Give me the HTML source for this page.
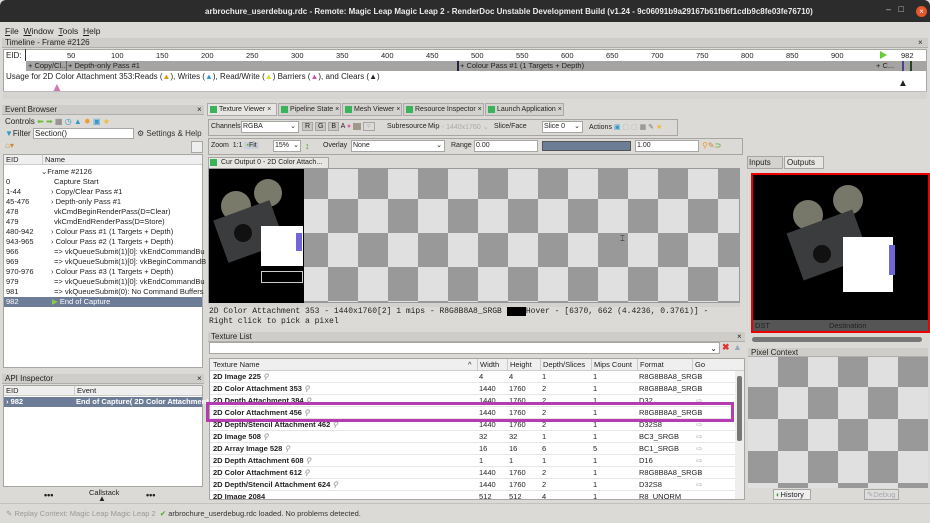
<!DOCTYPE html>
<html><head><meta charset="utf-8"><style>
*{margin:0;padding:0;box-sizing:border-box}
body{width:930px;height:523px;overflow:hidden;background:#dcdad6;font-family:"Liberation Sans",sans-serif;font-size:8px;color:#222;position:relative}
.a{position:absolute;white-space:nowrap}
.w{background:#fff}
.bd{border:1px solid #a8a6a2}
.ttl{background:#cfcdc9;border-bottom:1px solid #b0aea9;font-size:8px;padding-left:3px;line-height:9px}
.chk{background-color:#e0e0e0;background-image:repeating-conic-gradient(#999 0 25%,#e0e0e0 0 50%)}
.tab{position:absolute;top:103px;height:13px;background:#d4d2ce;border:1px solid #aaa;line-height:11px;font-size:7px;padding-left:11px;white-space:nowrap;overflow:hidden}
.tab:before{content:"";position:absolute;left:2px;top:2px;width:7px;height:7px;background:#3bb35a}
.row{position:absolute;left:0;height:10px;line-height:10px;width:100%}
.tr{position:absolute;left:0;width:100%;height:12px;line-height:12px;font-size:7.5px;border-bottom:1px solid #e6e6e6}
.tr span{position:absolute}
.t7{font-size:7px}
</style></head><body>
<!-- title bar -->
<div class="a" style="left:0;top:0;width:930px;height:22px;background:#2c2c2c;border-radius:6px 6px 0 0"></div>
<div class="a" style="left:205px;top:7px;color:#ececec;font-size:8px;font-weight:bold">arbrochure_userdebug.rdc - Remote: Magic Leap Magic Leap 2 - RenderDoc Unstable Development Build (v1.24 - 9c06091b9a29167b61fb6f1cdb9c8fe03fe76710)</div>
<div class="a" style="left:886px;top:4px;color:#ccc;font-size:9px">–&nbsp;&nbsp;&nbsp;□</div>
<div class="a" style="left:916px;top:6px;width:11px;height:11px;border-radius:50%;background:#e9552a;color:#fff;font-size:8px;text-align:center;line-height:11px">×</div>
<!-- menu -->
<div class="a" style="left:5px;top:26px;font-size:8.5px"><u>F</u>ile&nbsp;&nbsp;<u>W</u>indow&nbsp;&nbsp;<u>T</u>ools&nbsp;&nbsp;<u>H</u>elp</div>
<!-- timeline -->
<div class="a ttl" style="left:2px;top:38px;width:926px;height:10px">Timeline - Frame #2126</div>
<div class="a" style="left:918px;top:38px;font-size:8px">×</div>
<div class="a bd w" style="left:3px;top:49px;width:924px;height:50px"></div>
<div class="a" style="left:6px;top:51px;font-size:8px">EID:</div>
<div class="a" style="left:25px;top:49px;width:1px;height:12px;background:#333"></div>
<div class="a" style="left:5px;top:51px;width:910px;font-size:7.5px">
<span class="a" style="left:62px">50</span><span class="a" style="left:106px">100</span><span class="a" style="left:196px">200</span><span class="a" style="left:151px">150</span><span class="a" style="left:241px">250</span><span class="a" style="left:286px">300</span><span class="a" style="left:331px">350</span><span class="a" style="left:376px">400</span><span class="a" style="left:421px">450</span><span class="a" style="left:466px">500</span><span class="a" style="left:511px">550</span><span class="a" style="left:556px">600</span><span class="a" style="left:601px">650</span><span class="a" style="left:646px">700</span><span class="a" style="left:691px">750</span><span class="a" style="left:736px">800</span><span class="a" style="left:781px">850</span><span class="a" style="left:826px">900</span><span class="a" style="left:896px">982</span></div>
<div class="a" style="left:880px;top:51px;width:0;height:0;border-left:7px solid #6c3;border-top:4px solid transparent;border-bottom:4px solid transparent"></div>
<div class="a" style="left:26px;top:61px;width:900px;height:10px;background:#a5a4a2;font-size:7.5px;line-height:10px">
<span class="a" style="left:2px">+ Copy/Cl...</span><span class="a" style="left:40px;top:0;width:1px;height:10px;background:#666"></span><span class="a" style="left:42px">+ Depth-only Pass #1</span><span class="a" style="left:431px;width:2px;height:10px;background:#224"></span><span class="a" style="left:434px">+ Colour Pass #1 (1 Targets + Depth)</span><span class="a" style="left:850px">+ C...</span><span class="a" style="left:876px;width:2px;height:10px;background:#449"></span><span class="a" style="left:884px;width:2px;height:10px;background:#242"></span></div>
<div class="a" style="left:6px;top:72px;font-size:8px">Usage for 2D Color Attachment 353:Reads (<span style="color:#d90">▲</span>), Writes (<span style="color:#39d">▲</span>), Read/Write (<span style="color:#dd2">▲</span>) Barriers (<span style="color:#c5a">▲</span>), and Clears (▲)</div>
<div class="a" style="left:51px;top:80px;color:#d07ab5;font-size:12px">▲</div>
<div class="a" style="left:898px;top:78px;font-size:10px">▲</div>
<div class="a" style="left:3px;top:91px;width:924px;height:8px;background:#d6d4d0;border-top:1px solid #bbb"></div>
<!-- Event browser -->
<div class="a ttl" style="left:2px;top:105px;width:202px;height:10px">Event Browser</div>
<div class="a" style="left:197px;top:105px">×</div>
<div class="a" style="left:5px;top:117px;font-size:8px">Controls <span style="color:#6b3">⬅ ➡</span> <span style="color:#777">▦</span> <span style="color:#39c">◷ ▲</span> <span style="color:#e93">✸</span> <span style="color:#39c">▣</span> <span style="color:#eb3">★</span></div>
<div class="a" style="left:5px;top:129px;font-size:8px"><span style="color:#39c">▼</span>Filter</div>
<div class="a bd w" style="left:33px;top:128px;width:101px;height:11px;font-size:8px;line-height:9px;padding-left:1px">Section()</div>
<div class="a" style="left:137px;top:129px;font-size:8px;color:#333">⚙ Settings &amp; Help</div>
<div class="a" style="left:5px;top:141px;font-size:8px;color:#c83">⌂▾</div>
<div class="a bd" style="left:191px;top:141px;width:12px;height:12px;background:#eee"></div>
<div class="a bd w" style="left:3px;top:154px;width:200px;height:214px;font-size:7.5px">
<div class="row" style="top:0;background:#efefef;border-bottom:1px solid #ccc"><span class="a" style="left:2px">EID</span><span class="a" style="left:38px;border-left:1px solid #ccc;padding-left:2px">Name</span></div>
<div class="row" style="top:12px"><span class="a" style="left:37px">⌄Frame #2126</span></div>
<div class="row" style="top:22px"><span class="a" style="left:2px">0</span><span class="a" style="left:50px">Capture Start</span></div>
<div class="row" style="top:32px"><span class="a" style="left:2px">1-44</span><span class="a" style="left:47px">› Copy/Clear Pass #1</span></div>
<div class="row" style="top:42px"><span class="a" style="left:2px">45-476</span><span class="a" style="left:47px">› Depth-only Pass #1</span></div>
<div class="row" style="top:52px"><span class="a" style="left:2px">478</span><span class="a" style="left:50px">vkCmdBeginRenderPass(D=Clear)</span></div>
<div class="row" style="top:62px"><span class="a" style="left:2px">479</span><span class="a" style="left:50px">vkCmdEndRenderPass(D=Store)</span></div>
<div class="row" style="top:72px"><span class="a" style="left:2px">480-942</span><span class="a" style="left:47px">› Colour Pass #1 (1 Targets + Depth)</span></div>
<div class="row" style="top:82px"><span class="a" style="left:2px">943-965</span><span class="a" style="left:47px">› Colour Pass #2 (1 Targets + Depth)</span></div>
<div class="row" style="top:92px"><span class="a" style="left:2px">966</span><span class="a" style="left:50px">=&gt; vkQueueSubmit(1)[0]: vkEndCommandBu</span></div>
<div class="row" style="top:102px"><span class="a" style="left:2px">969</span><span class="a" style="left:50px">=&gt; vkQueueSubmit(1)[0]: vkBeginCommandB</span></div>
<div class="row" style="top:112px"><span class="a" style="left:2px">970-976</span><span class="a" style="left:47px">› Colour Pass #3 (1 Targets + Depth)</span></div>
<div class="row" style="top:122px"><span class="a" style="left:2px">979</span><span class="a" style="left:50px">=&gt; vkQueueSubmit(1)[0]: vkEndCommandBu</span></div>
<div class="row" style="top:132px"><span class="a" style="left:2px">981</span><span class="a" style="left:50px">=&gt; vkQueueSubmit(0): No Command Buffers</span></div>
<div class="row" style="top:142px;background:#6d7d98;color:#fff"><span class="a" style="left:2px">982</span><span class="a" style="left:48px"><span style="color:#8c4">▶</span> End of Capture</span></div>
</div>
<!-- API inspector -->
<div class="a ttl" style="left:2px;top:374px;width:202px;height:10px">API Inspector</div>
<div class="a" style="left:197px;top:374px">×</div>
<div class="a bd w" style="left:3px;top:385px;width:200px;height:102px;font-size:7.5px">
<div class="row" style="top:0;background:#efefef;border-bottom:1px solid #ccc"><span class="a" style="left:2px">EID</span><span class="a" style="left:70px;border-left:1px solid #ccc;padding-left:2px">Event</span></div>
<div class="row" style="top:11px;background:#6d7d98;color:#fff;font-weight:bold"><span class="a" style="left:2px">› 982</span><span class="a" style="left:72px">End of Capture( 2D Color Attachment</span></div>
</div>
<div class="a" style="left:44px;top:490px;font-size:9px;font-weight:bold">•••</div>
<div class="a" style="left:89px;top:488px;font-size:7.5px">Callstack</div>
<div class="a" style="left:98px;top:494px;font-size:8px">▲</div>
<div class="a" style="left:146px;top:490px;font-size:9px;font-weight:bold">•••</div>
<div class="a" style="left:0;top:503px;width:930px;height:1px;background:#c4c2be"></div>
<div class="a" style="left:6px;top:509px;font-size:7.5px;color:#999">✎ Replay Context: Magic Leap Magic Leap 2 &nbsp;<span style="color:#4a2">✔</span> <span style="color:#333">arbrochure_userdebug.rdc loaded. No problems detected.</span></div>
<!-- tabs -->
<div class="tab" style="left:207px;width:70px;background:#e8e6e2">Texture Viewer ×</div>
<div class="tab" style="left:278px;width:63px">Pipeline State ×</div>
<div class="tab" style="left:342px;width:60px">Mesh Viewer ×</div>
<div class="tab" style="left:403px;width:81px">Resource Inspector ×</div>
<div class="tab" style="left:485px;width:79px">Launch Application ×</div>
<!-- toolbars -->
<div class="a bd" style="left:208px;top:119px;width:470px;height:17px"></div>
<div class="a t7" style="left:211px;top:123px">Channels</div>
<div class="a bd w t7" style="left:241px;top:121px;width:58px;height:12px;line-height:10px;padding-left:1px">RGBA<span style="float:right;margin-right:2px">⌄</span></div>
<div class="a t7" style="left:302px;top:121px;line-height:12px"><span class="bd" style="padding:0 2px;background:#c9c7c3">R</span> <span class="bd" style="padding:0 2px;background:#c9c7c3">G</span> <span class="bd" style="padding:0 2px;background:#c9c7c3">B</span> A <span style="color:#d6a">●</span> <span style="background:#a0988a;padding:0 3px">&nbsp;</span> <span class="bd" style="padding:0 3px;color:#aab">▿</span></div>
<div class="a t7" style="left:387px;top:123px">Subresource</div>
<div class="a t7" style="left:428px;top:123px">Mip</div>
<div class="a t7" style="left:436px;top:123px;color:#aaa">0 - 1440x1760 ⌄</div>
<div class="a t7" style="left:494px;top:123px">Slice/Face</div>
<div class="a bd w t7" style="left:542px;top:121px;width:41px;height:12px;line-height:10px;padding-left:1px">Slice 0<span style="float:right;margin-right:2px">⌄</span></div>
<div class="a t7" style="left:589px;top:123px">Actions <span style="color:#39c">▣</span> <span style="color:#bbb">▢ ▢</span> <span style="color:#777">▦ ✎</span> <span style="color:#eb3">★</span></div>
<div class="a bd" style="left:208px;top:138px;width:535px;height:17px"></div>
<div class="a t7" style="left:211px;top:142px">Zoom &nbsp;1:1 <span style="background:#c8cfd8;padding:0 2px"><span style="color:#6b3">▪</span>Fit</span></div>
<div class="a bd w t7" style="left:273px;top:140px;width:28px;height:12px;line-height:10px;padding-left:1px">15%<span style="float:right;margin-right:1px">⌄</span></div>
<div class="a" style="left:305px;top:141px;color:#4a2;font-size:9px">↕</div>
<div class="a t7" style="left:323px;top:142px">Overlay</div>
<div class="a bd w t7" style="left:351px;top:140px;width:94px;height:12px;line-height:10px;padding-left:1px">None<span style="float:right;margin-right:2px">⌄</span></div>
<div class="a t7" style="left:451px;top:142px">Range</div>
<div class="a bd w t7" style="left:474px;top:140px;width:64px;height:12px;line-height:10px;padding-left:1px">0.00</div>
<div class="a" style="left:542px;top:141px;width:89px;height:10px;background:#6c7d96;border:1px solid #555"></div>
<div class="a bd w t7" style="left:635px;top:140px;width:64px;height:12px;line-height:10px;padding-left:1px">1.00</div>
<div class="a" style="left:702px;top:141px;font-size:8px"><span style="color:#e93">⚲</span><span style="color:#c83">✎</span><span style="color:#4a2">⊃</span></div>
<!-- cur output tab -->
<div class="a bd t7" style="left:208px;top:157px;width:121px;height:12px;line-height:10px;padding-left:12px;background:#e8e6e2">Cur Output 0 - 2D Color Attach...</div>
<div class="a" style="left:210px;top:159px;width:7px;height:7px;background:#3bb35a"></div>
<!-- image area -->
<div class="a chk" style="left:208px;top:168px;width:532px;height:135px;background-size:60px 68px;background-position:59px -4px;border:1px solid #999"></div>
<div class="a" style="left:209px;top:169px;width:95px;height:134px;background:#000;overflow:hidden">
<div class="a" style="left:12px;top:22px;width:30px;height:30px;border-radius:50%;background:#7a7a6a"></div>
<div class="a" style="left:45px;top:10px;width:28px;height:28px;border-radius:50%;background:#7a7a6a"></div>
<div class="a" style="left:10px;top:40px;width:60px;height:45px;background:#3a3c3e;transform:rotate(-20deg)"></div>
<div class="a" style="left:25px;top:55px;width:18px;height:18px;border-radius:50%;background:#111"></div>
<div class="a" style="left:52px;top:57px;width:42px;height:40px;background:#fff"></div>
<div class="a" style="left:52px;top:102px;width:42px;height:12px;border:1px solid #ccc"></div>
<div class="a" style="left:87px;top:64px;width:6px;height:18px;background:#7066d8"></div>
</div>
<div class="a" style="left:620px;top:234px;font-size:8px">⌶</div>
<div class="a" style="left:208px;top:303px;width:532px;height:4px;background:#d4d2ce"></div>
<div class="a" style="left:209px;top:307px;font-family:'Liberation Mono',monospace;font-size:8px;line-height:10px">2D Color Attachment 353 - 1440x1760[2] 1 mips - R8G8B8A8_SRGB <span style="background:#000">&nbsp;&nbsp;&nbsp;&nbsp;</span>Hover - [6370, 662 (4.4236, 0.3761)] -<br>Right click to pick a pixel</div>
<!-- texture list -->
<div class="a ttl" style="left:208px;top:332px;width:537px;height:10px">Texture List</div>
<div class="a" style="left:737px;top:332px">×</div>
<div class="a bd w" style="left:209px;top:342px;width:511px;height:12px"><span class="a" style="right:2px;top:1px">⌄</span></div>
<div class="a" style="left:722px;top:342px;color:#d33;font-weight:bold;font-size:9px">✖</div>
<div class="a" style="left:733px;top:342px;color:#9ab;font-size:9px">▲</div>
<div class="a bd w" style="left:209px;top:358px;width:536px;height:142px;overflow:hidden">
<div class="tr" style="top:0;background:#efefef;border-bottom:1px solid #ccc"><span style="left:3px">Texture Name</span><span style="left:258px">^</span><span style="left:267px;border-left:1px solid #ccc;padding-left:2px">Width</span><span style="left:297px;border-left:1px solid #ccc;padding-left:2px">Height</span><span style="left:330px;border-left:1px solid #ccc;padding-left:2px">Depth/Slices</span><span style="left:381px;border-left:1px solid #ccc;padding-left:2px">Mips Count</span><span style="left:427px;border-left:1px solid #ccc;padding-left:2px">Format</span><span style="left:482px;border-left:1px solid #ccc;padding-left:2px">Go</span></div>
<div class="tr" style="top:12px"><span style="left:3px;font-weight:bold">2D Image 225 <i style="color:#aaa">⚲</i></span><span style="left:269px">4</span><span style="left:299px">4</span><span style="left:332px">1</span><span style="left:383px">1</span><span style="left:429px">R8G8B8A8_SRGB</span><span style="left:486px;color:#aaa">⇨</span></div>
<div class="tr" style="top:24px"><span style="left:3px;font-weight:bold">2D Color Attachment 353 <i style="color:#aaa">⚲</i></span><span style="left:269px">1440</span><span style="left:299px">1760</span><span style="left:332px">2</span><span style="left:383px">1</span><span style="left:429px">R8G8B8A8_SRGB</span><span style="left:486px;color:#aaa">⇨</span></div>
<div class="tr" style="top:36px"><span style="left:3px;font-weight:bold">2D Depth Attachment 384 <i style="color:#aaa">⚲</i></span><span style="left:269px">1440</span><span style="left:299px">1760</span><span style="left:332px">2</span><span style="left:383px">1</span><span style="left:429px">D32</span><span style="left:486px;color:#aaa">⇨</span></div>
<div class="tr" style="top:48px"><span style="left:3px;font-weight:bold">2D Color Attachment 456 <i style="color:#aaa">⚲</i></span><span style="left:269px">1440</span><span style="left:299px">1760</span><span style="left:332px">2</span><span style="left:383px">1</span><span style="left:429px">R8G8B8A8_SRGB</span><span style="left:486px;color:#aaa">⇨</span></div>
<div class="tr" style="top:60px"><span style="left:3px;font-weight:bold">2D Depth/Stencil Attachment 462 <i style="color:#aaa">⚲</i></span><span style="left:269px">1440</span><span style="left:299px">1760</span><span style="left:332px">2</span><span style="left:383px">1</span><span style="left:429px">D32S8</span><span style="left:486px;color:#aaa">⇨</span></div>
<div class="tr" style="top:72px"><span style="left:3px;font-weight:bold">2D Image 508 <i style="color:#aaa">⚲</i></span><span style="left:269px">32</span><span style="left:299px">32</span><span style="left:332px">1</span><span style="left:383px">1</span><span style="left:429px">BC3_SRGB</span><span style="left:486px;color:#aaa">⇨</span></div>
<div class="tr" style="top:84px"><span style="left:3px;font-weight:bold">2D Array Image 528 <i style="color:#aaa">⚲</i></span><span style="left:269px">16</span><span style="left:299px">16</span><span style="left:332px">6</span><span style="left:383px">5</span><span style="left:429px">BC1_SRGB</span><span style="left:486px;color:#aaa">⇨</span></div>
<div class="tr" style="top:96px"><span style="left:3px;font-weight:bold">2D Depth Attachment 608 <i style="color:#aaa">⚲</i></span><span style="left:269px">1</span><span style="left:299px">1</span><span style="left:332px">1</span><span style="left:383px">1</span><span style="left:429px">D16</span><span style="left:486px;color:#aaa">⇨</span></div>
<div class="tr" style="top:108px"><span style="left:3px;font-weight:bold">2D Color Attachment 612 <i style="color:#aaa">⚲</i></span><span style="left:269px">1440</span><span style="left:299px">1760</span><span style="left:332px">2</span><span style="left:383px">1</span><span style="left:429px">R8G8B8A8_SRGB</span><span style="left:486px;color:#aaa">⇨</span></div>
<div class="tr" style="top:120px"><span style="left:3px;font-weight:bold">2D Depth/Stencil Attachment 624 <i style="color:#aaa">⚲</i></span><span style="left:269px">1440</span><span style="left:299px">1760</span><span style="left:332px">2</span><span style="left:383px">1</span><span style="left:429px">D32S8</span><span style="left:486px;color:#aaa">⇨</span></div>
<div class="tr" style="top:132px"><span style="left:3px;font-weight:bold">2D Image 2084</span><span style="left:269px">512</span><span style="left:299px">512</span><span style="left:332px">4</span><span style="left:383px">1</span><span style="left:429px">R8_UNORM</span></div>
<div class="a" style="left:525px;top:12px;width:9px;height:128px;background:#eee"></div>
<div class="a" style="left:527px;top:17px;width:5px;height:65px;background:#777;border-radius:2px"></div>
</div>
<div class="a" style="left:206px;top:402px;width:528px;height:20px;border:3px solid #b53cb0"></div>
<!-- right panel -->
<div class="a bd" style="left:747px;top:156px;width:36px;height:13px;background:#d4d2ce;font-size:8px;line-height:11px;padding-left:1px">Inputs</div>
<div class="a bd" style="left:784px;top:156px;width:40px;height:13px;background:#e8e6e2;font-size:8px;line-height:11px;padding-left:2px">Outputs</div>
<div class="a" style="left:751px;top:173px;width:179px;height:160px;background:#000;border:2px solid #e00;overflow:hidden">
<div class="a" style="left:40px;top:25px;width:30px;height:30px;border-radius:50%;background:#77776a"></div>
<div class="a" style="left:80px;top:10px;width:30px;height:30px;border-radius:50%;background:#77776a"></div>
<div class="a" style="left:40px;top:45px;width:70px;height:50px;background:#3a3c3e;transform:rotate(-20deg)"></div>
<div class="a" style="left:60px;top:70px;width:18px;height:18px;border-radius:50%;background:#111"></div>
<div class="a" style="left:90px;top:62px;width:50px;height:55px;background:#fff"></div>
<div class="a" style="left:136px;top:70px;width:6px;height:30px;background:#7066d8"></div>
<div class="a" style="left:0;top:145px;width:179px;height:11px;background:#555;color:#222;font-size:7.5px;line-height:11px;padding-left:2px">DST<span class="a" style="left:76px">Destination</span></div>
</div>
<div class="a" style="left:752px;top:337px;width:170px;height:5px;background:#777;border-radius:3px"></div>
<div class="a ttl" style="left:748px;top:348px;width:180px;height:9px">Pixel Context</div>
<div class="a chk" style="left:748px;top:357px;width:180px;height:131px;background-size:60px 64px;background-position:0 -2px"></div>
<div class="a bd" style="left:773px;top:489px;width:38px;height:11px;background:#eee;font-size:7.5px;line-height:9px;padding-left:2px"><span style="color:#4a2">◐</span>History</div>
<div class="a bd" style="left:864px;top:489px;width:35px;height:11px;background:#ddd;color:#aaa;font-size:7.5px;line-height:9px;padding-left:2px">✎Debug</div>
</body></html>
